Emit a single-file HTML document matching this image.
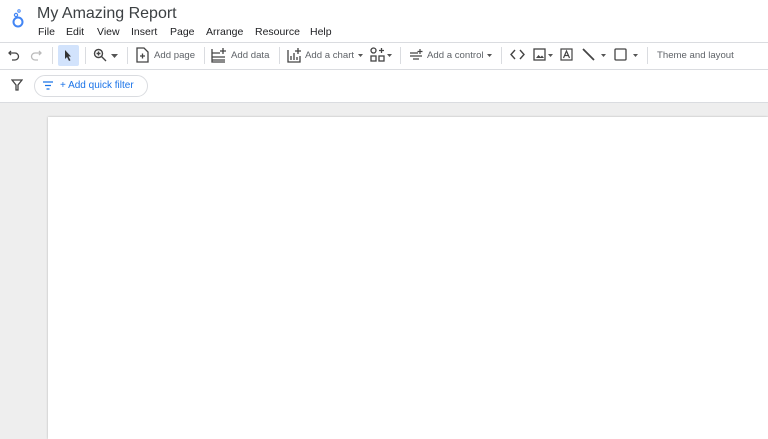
<!DOCTYPE html>
<html><head><meta charset="utf-8"><style>
*{margin:0;padding:0;box-sizing:border-box}
body{width:768px;height:439px;overflow:hidden;background:#fff;font-family:"Liberation Sans",Arial,sans-serif;position:relative}
.abs{position:absolute}
.title{left:37px;top:5px;font-size:16px;color:#3c4043}
.menu{top:26px;font-size:10.5px;color:#202124}
.tb{top:42px;left:0;width:768px;height:28px;border-top:1px solid #dadce0;border-bottom:1px solid #dadce0}
.t{top:50px;font-size:9.6px;color:#5f6368;line-height:11px}
.sep{top:47px;width:1px;height:17px;background:#dadce0}
.fb{top:70px;left:0;width:768px;height:33px;border-bottom:1px solid #dadce0}
.canvas{top:103px;left:0;width:768px;height:336px;background:#eeeeee}
.page{top:117px;left:48px;width:720px;height:322px;background:#fff;box-shadow:0 0 2px rgba(0,0,0,.25)}
svg{position:absolute}
</style></head><body>
<svg style="left:11px;top:8px" width="16" height="22" viewBox="0 0 16 22"><circle cx="7" cy="14" r="4.5" fill="none" stroke="#4285f4" stroke-width="2"/><circle cx="5" cy="7" r="1.6" fill="none" stroke="#4285f4" stroke-width="1.2"/><circle cx="8" cy="3" r="1.2" fill="none" stroke="#4285f4" stroke-width="1"/></svg>
<div class="abs title">My Amazing Report</div>
<div class="abs menu" style="left:38px">File</div>
<div class="abs menu" style="left:66px">Edit</div>
<div class="abs menu" style="left:97px">View</div>
<div class="abs menu" style="left:131px">Insert</div>
<div class="abs menu" style="left:170px">Page</div>
<div class="abs menu" style="left:206px">Arrange</div>
<div class="abs menu" style="left:255px">Resource</div>
<div class="abs menu" style="left:310px">Help</div>
<div class="abs tb"></div>
<svg style="left:8px;top:49px" width="12" height="12" viewBox="0 0 12 12"><path d="M3 2L1 4l2 2M1 4h6a3.5 3.5 0 010 7H4" fill="none" stroke="#444" stroke-width="1.3"/></svg>
<svg style="left:30px;top:49px" width="12" height="12" viewBox="0 0 12 12"><path d="M9 2l2 2-2 2M11 4H5a3.5 3.5 0 000 7h3" fill="none" stroke="#bbb" stroke-width="1.3"/></svg>
<div class="abs sep" style="left:52px"></div>
<div class="abs" style="left:58px;top:45px;width:21px;height:21px;background:#d2e3fc;border-radius:2px"></div>
<svg style="left:64px;top:50px" width="9" height="11" viewBox="0 0 9 11"><path d="M1 0v9l2-2 2 4 1.5-.7-2-3.8H7z" fill="#333"/></svg>
<div class="abs sep" style="left:85px"></div>
<svg style="left:93px;top:48px" width="14" height="14" viewBox="0 0 14 14"><circle cx="5.5" cy="5.5" r="4" fill="none" stroke="#444" stroke-width="1.4"/><path d="M8.5 8.5L13 13M3.5 5.5h4M5.5 3.5v4" stroke="#444" stroke-width="1.4"/></svg>
<svg style="left:111px;top:54px" width="7" height="4"><path d="M0 0h7L3.5 4z" fill="#555"/></svg>
<div class="abs sep" style="left:127px"></div>
<svg style="left:136px;top:47px" width="13" height="16" viewBox="0 0 13 16"><path d="M1 1h7l4 4v10H1z M4 9h5M6.5 6.5v5" fill="none" stroke="#444" stroke-width="1.3"/></svg>
<div class="abs t" style="left:154px">Add page</div>
<div class="abs sep" style="left:204px"></div>
<svg style="left:211px;top:47px" width="16" height="16" viewBox="0 0 16 16"><path d="M1 2v13h13M1 6h8M1 10h13M1 13h13M12 1v6M9 4h6" fill="none" stroke="#444" stroke-width="1.3"/></svg>
<div class="abs t" style="left:231px">Add data</div>
<div class="abs sep" style="left:279px"></div>
<svg style="left:287px;top:47px" width="15" height="16" viewBox="0 0 15 16"><path d="M1 3v12h12V9M4 13V9M7 13V6M10 13v-3M11 1v6M8 4h6" fill="none" stroke="#444" stroke-width="1.3"/></svg>
<div class="abs t" style="left:305px">Add a chart</div>
<svg style="left:358px;top:54px" width="5" height="3"><path d="M0 0h5L2.5 3z" fill="#555"/></svg>
<svg style="left:370px;top:47px" width="15" height="15" viewBox="0 0 15 15"><circle cx="3.5" cy="3.5" r="2.5" fill="none" stroke="#444" stroke-width="1.3"/><rect x="1" y="9" width="5" height="5" fill="none" stroke="#444" stroke-width="1.3"/><rect x="9" y="9" width="5" height="5" fill="none" stroke="#444" stroke-width="1.3"/><path d="M11.5 1v5M9 3.5h5" stroke="#444" stroke-width="1.3"/></svg>
<svg style="left:387px;top:54px" width="5" height="3"><path d="M0 0h5L2.5 3z" fill="#555"/></svg>
<div class="abs sep" style="left:400px"></div>
<svg style="left:409px;top:48px" width="14" height="13" viewBox="0 0 14 13"><path d="M1 5h8M1 8h12M4 11h6M11 1v5M8.5 3.5h5" stroke="#444" stroke-width="1.2"/></svg>
<div class="abs t" style="left:427px">Add a control</div>
<svg style="left:487px;top:54px" width="5" height="3"><path d="M0 0h5L2.5 3z" fill="#555"/></svg>
<div class="abs sep" style="left:501px"></div>
<svg style="left:510px;top:49px" width="15" height="11" viewBox="0 0 15 11"><path d="M5 1L1 5.5 5 10M10 1l4 4.5-4 4.5" fill="none" stroke="#444" stroke-width="1.4"/></svg>
<svg style="left:533px;top:48px" width="13" height="13" viewBox="0 0 13 13"><rect x="1" y="1" width="11" height="11" fill="none" stroke="#444" stroke-width="1.3"/><path d="M3 10l2.5-3 2 2 1.5-1.5L11 10z" fill="#444"/></svg>
<svg style="left:548px;top:54px" width="5" height="3"><path d="M0 0h5L2.5 3z" fill="#555"/></svg>
<svg style="left:560px;top:48px" width="13" height="13" viewBox="0 0 13 13"><rect x="1" y="1" width="11" height="11" fill="none" stroke="#444" stroke-width="1.2"/><path d="M3.5 10L6.5 3l3 7M4.6 7.5h3.8" fill="none" stroke="#444" stroke-width="1.2"/></svg>
<svg style="left:582px;top:48px" width="13" height="13" viewBox="0 0 13 13"><path d="M1 1l11 11" stroke="#444" stroke-width="1.8"/></svg>
<svg style="left:601px;top:54px" width="5" height="3"><path d="M0 0h5L2.5 3z" fill="#555"/></svg>
<svg style="left:614px;top:48px" width="13" height="13" viewBox="0 0 13 13"><rect x="1" y="1" width="11" height="11" rx="1" fill="none" stroke="#444" stroke-width="1.3"/></svg>
<svg style="left:633px;top:54px" width="5" height="3"><path d="M0 0h5L2.5 3z" fill="#555"/></svg>
<div class="abs sep" style="left:647px"></div>
<div class="abs t" style="left:657px">Theme and layout</div>
<div class="abs fb"></div>
<svg style="left:11px;top:79px" width="12" height="12" viewBox="0 0 12 12"><path d="M1 1h10L7 6v5H5V6z" fill="none" stroke="#444" stroke-width="1.3"/></svg>
<div class="abs" style="left:34px;top:75px;width:114px;height:22px;border:1px solid #dadce0;border-radius:11px"></div>
<svg style="left:43px;top:81px" width="10" height="9" viewBox="0 0 10 9"><path d="M0 1h10M2 4.5h6M3.5 8h3" stroke="#1a73e8" stroke-width="1.2"/></svg>
<div class="abs" style="left:60px;top:80px;font-size:10px;line-height:12px;color:#1a73e8">+ Add quick filter</div>
<div class="abs canvas"></div>
<div class="abs page"></div>
</body></html>
